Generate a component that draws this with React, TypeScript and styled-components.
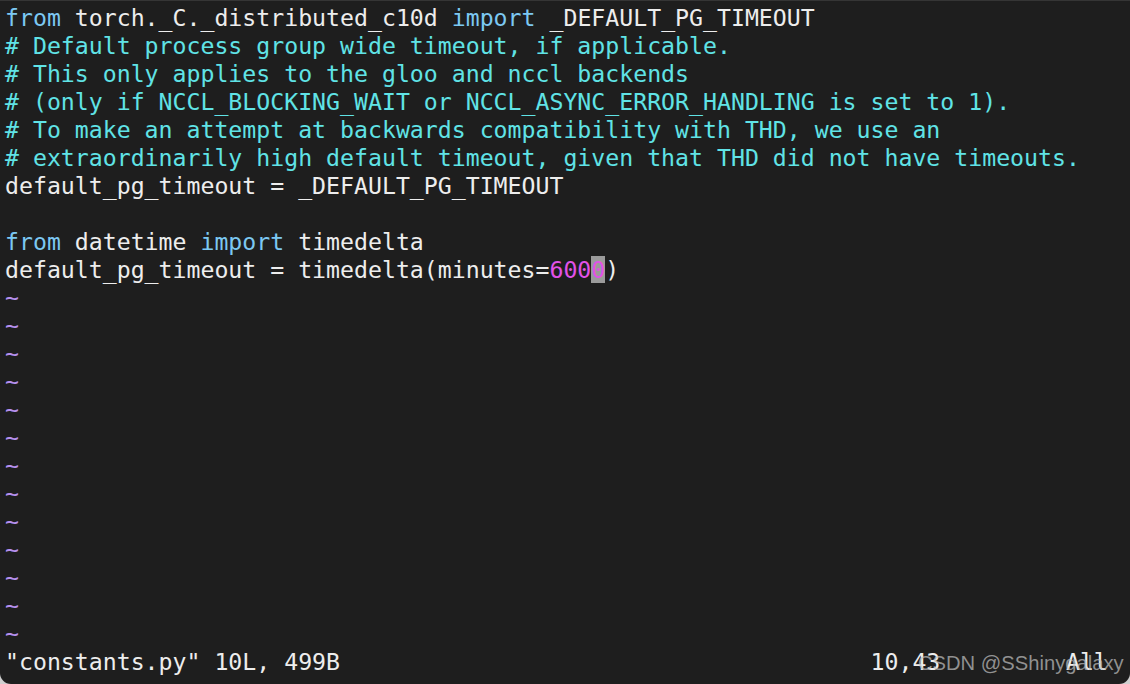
import React from "react";
import styled, { createGlobalStyle } from "styled-components";

const Global = createGlobalStyle`
  html, body { margin: 0; padding: 0; background: #cfcfcf; }
  body { width: 1130px; height: 684px; overflow: hidden; }
`;

const Terminal = styled.div`
  position: relative;
  width: 1130px;
  height: 684px;
  box-sizing: border-box;
  background: #1e1e1e;
  border-top: 1px solid #353535;
  border-radius: 0 0 11px 11px;
  padding: 3px 0 0 5px;
  font-family: "DejaVu Sans Mono", "Liberation Mono", monospace;
  font-size: 23.2px;
  color: #ededed;
  overflow: hidden;
`;

const Line = styled.div`
  height: 28px;
  line-height: 28px;
  white-space: pre;
`;

type Tone = "kw" | "comment" | "num" | "tilde";
const toneColor: Record<Tone, string> = {
  kw: "#7cc8f2",
  comment: "#60e3e6",
  num: "#e252e8",
  tilde: "#b690ee",
};

const Tok = styled.span<{ $tone: Tone }>`
  color: ${(p) => toneColor[p.$tone]};
`;

const Cursor = styled.span`
  background: #9b9b9b;
  color: #e252e8;
`;

const StatusLine = styled.div`
  display: flex;
  height: 28px;
  line-height: 28px;
  white-space: pre;
`;

const StatusCell = styled.span<{ $ch: number }>`
  width: ${(p) => p.$ch}ch;
  flex: none;
`;

const Watermark = styled.div`
  position: absolute;
  left: 918px;
  top: 648px;
  font-family: "Liberation Sans", Arial, sans-serif;
  font-size: 20.2px;
  line-height: 28px;
  color: rgba(190, 190, 190, 0.72);
  white-space: nowrap;
`;

const comments = [
  "# Default process group wide timeout, if applicable.",
  "# This only applies to the gloo and nccl backends",
  "# (only if NCCL_BLOCKING_WAIT or NCCL_ASYNC_ERROR_HANDLING is set to 1).",
  "# To make an attempt at backwards compatibility with THD, we use an",
  "# extraordinarily high default timeout, given that THD did not have timeouts.",
];

export default function App() {
  return (
    <>
      <Global />
      <Terminal>
        <Line>
          <Tok $tone="kw">from</Tok> torch._C._distributed_c10d{" "}
          <Tok $tone="kw">import</Tok> _DEFAULT_PG_TIMEOUT
        </Line>
        {comments.map((c) => (
          <Line key={c}>
            <Tok $tone="comment">{c}</Tok>
          </Line>
        ))}
        <Line>default_pg_timeout = _DEFAULT_PG_TIMEOUT</Line>
        <Line> </Line>
        <Line>
          <Tok $tone="kw">from</Tok> datetime <Tok $tone="kw">import</Tok> timedelta
        </Line>
        <Line>
          default_pg_timeout = timedelta(minutes=<Tok $tone="num">600</Tok>
          <Cursor>0</Cursor>)
        </Line>
        {Array.from({ length: 13 }).map((_, i) => (
          <Line key={i}>
            <Tok $tone="tilde">~</Tok>
          </Line>
        ))}
        <StatusLine>
          <StatusCell $ch={62}>"constants.py" 10L, 499B</StatusCell>
          <StatusCell $ch={14}>10,43</StatusCell>
          <StatusCell $ch={3}>All</StatusCell>
        </StatusLine>
        <Watermark>CSDN @SShinygalaxy</Watermark>
      </Terminal>
    </>
  );
}
